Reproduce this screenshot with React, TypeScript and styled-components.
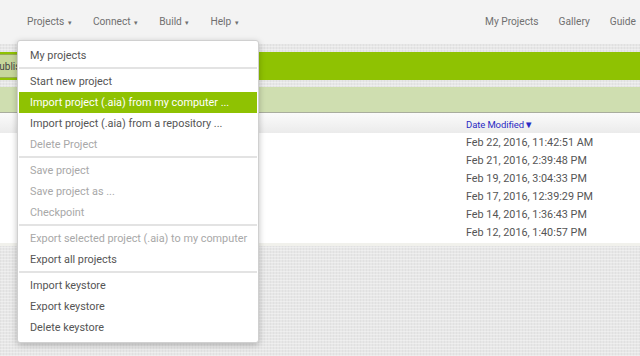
import React from 'react'
import styled, { createGlobalStyle } from 'styled-components';

const GlobalStyle = createGlobalStyle`
  html, body {
    margin: 0;
    padding: 0;
  }
  body {
    font-family: Roboto, "Liberation Sans", sans-serif;
    background-color: #e7e7e7;
    background-image:
      repeating-linear-gradient(0deg, rgba(255,255,255,0.35) 0 1px, transparent 1px 3px),
      repeating-linear-gradient(90deg, rgba(0,0,0,0.03) 0 1px, transparent 1px 3px);
    height: 356px;
    overflow: hidden;
  }
`;

type MenuEntry = { label: string; disabled?: boolean; active?: boolean } | 'divider';

const menuEntries: MenuEntry[] = [
  { label: 'My projects' },
  'divider',
  { label: 'Start new project' },
  { label: 'Import project (.aia) from my computer ...', active: true },
  { label: 'Import project (.aia) from a repository ...' },
  { label: 'Delete Project', disabled: true },
  'divider',
  { label: 'Save project', disabled: true },
  { label: 'Save project as ...', disabled: true },
  { label: 'Checkpoint', disabled: true },
  'divider',
  { label: 'Export selected project (.aia) to my computer', disabled: true },
  { label: 'Export all projects' },
  'divider',
  { label: 'Import keystore' },
  { label: 'Export keystore' },
  { label: 'Delete keystore' },
];

const dates = [
  'Feb 22, 2016, 11:42:51 AM',
  'Feb 21, 2016, 2:39:48 PM',
  'Feb 19, 2016, 3:04:33 PM',
  'Feb 17, 2016, 12:39:29 PM',
  'Feb 14, 2016, 1:36:43 PM',
  'Feb 12, 2016, 1:40:57 PM',
];

const App: React.FC = () => {
  return (
    <Page>
      <GlobalStyle />
      <TopBar>
        <NavLeft>
          <NavItem>Projects <Caret>▾</Caret></NavItem>
          <NavItem>Connect <Caret>▾</Caret></NavItem>
          <NavItem>Build <Caret>▾</Caret></NavItem>
          <NavItem>Help <Caret>▾</Caret></NavItem>
        </NavLeft>
        <NavRight>
          <NavItem>My Projects</NavItem>
          <NavItem>Gallery</NavItem>
          <NavItem>Guide</NavItem>
        </NavRight>
      </TopBar>
      <Strip $h={8} />
      <Toolbar>
        <ToolButton>Publish</ToolButton>
      </Toolbar>
      <Strip $h={7} />
      <ListTitle />
      <Table>
        <HeaderRow>
          <span />
          <SortLink>Date Modified▼</SortLink>
        </HeaderRow>
        {dates.map((d) => (
          <Row key={d}>
            <span />
            <DateCell>{d}</DateCell>
          </Row>
        ))}
      </Table>

      <Menu>
        {menuEntries.map((e, i) =>
          e === 'divider' ? (
            <Divider key={i} />
          ) : (
            <MenuItem key={i} $disabled={e.disabled} $active={e.active}>
              {e.label}
            </MenuItem>
          )
        )}
      </Menu>
    </Page>
  )
}

export default App;

const Page = styled.div`
  position: relative;
  width: 640px;
  height: 356px;
  overflow: hidden;
`;
const TopBar = styled.div`
  height: 44px;
  background: #f3f3f3;
  display: flex;
  align-items: center;
  justify-content: space-between;
  padding: 0 4px 2px 27px;
  box-sizing: border-box;
`;
const NavLeft = styled.div`
  display: flex;
  gap: 21px;
`;
const NavRight = styled.div`
  display: flex;
  gap: 20px;
`;
const NavItem = styled.span`
  font-size: 10.2px;
  color: #707070;
  white-space: nowrap;
`;
const Caret = styled.span`
  font-size: 7px;
  margin-left: 1px;
`;
const Strip = styled.div<{ $h: number }>`
  height: ${(p) => p.$h}px;
`;
const Toolbar = styled.div`
  height: 28px;
  background: #8fc202;
  display: flex;
  align-items: center;
  overflow: hidden;
`;
const ToolButton = styled.div`
  margin-left: -16px;
  height: 22px;
  padding: 0 8px;
  display: flex;
  align-items: center;
  background: #c6d69b;
  border: 1px solid #98ab56;
  border-radius: 2px;
  font-size: 10px;
  color: #444;
  white-space: nowrap;
`;
const ListTitle = styled.div`
  height: 25px;
  background: #cfdeb0;
  border-bottom: 1px solid #a9ad9e;
`;
const Table = styled.div`
  background: #fff;
  border-bottom: 3px solid #f1f1ec;
  padding-bottom: 2px;
`;
const HeaderRow = styled.div`
  height: 20px;
  display: grid;
  grid-template-columns: 466px 1fr;
  align-items: center;
  background: linear-gradient(#fbfbfb, #ebebeb);
`;
const SortLink = styled.span`
  font-size: 9.5px;
  color: #2b2bc4;
  padding-top: 2px;
  letter-spacing: -0.1px;
`;
const Row = styled.div`
  height: 18px;
  display: grid;
  grid-template-columns: 466px 1fr;
  align-items: center;
`;
const DateCell = styled.span`
  font-size: 10.8px;
  color: #555;
  white-space: nowrap;
`;
const Menu = styled.div`
  position: absolute;
  left: 17px;
  top: 40px;
  width: 242px;
  box-sizing: border-box;
  padding: 4px 1px 4px;
  background: #fff;
  border: 1px solid #d0d0d0;
  border-radius: 3px;
  box-shadow: 0 2px 6px rgba(0, 0, 0, 0.25);
`;
const MenuItem = styled.div<{ $disabled?: boolean; $active?: boolean }>`
  height: 21px;
  line-height: 21px;
  padding-left: 11px;
  font-size: 10.85px;
  white-space: nowrap;
  color: ${(p) => (p.$active ? '#fff' : p.$disabled ? '#a8a8a8' : '#555')};
  background: ${(p) => (p.$active ? '#8fc202' : 'transparent')};
`;
const Divider = styled.div`
  height: 2px;
  margin: 1px 0 2px;
  background: #e3e3e3;
`;
